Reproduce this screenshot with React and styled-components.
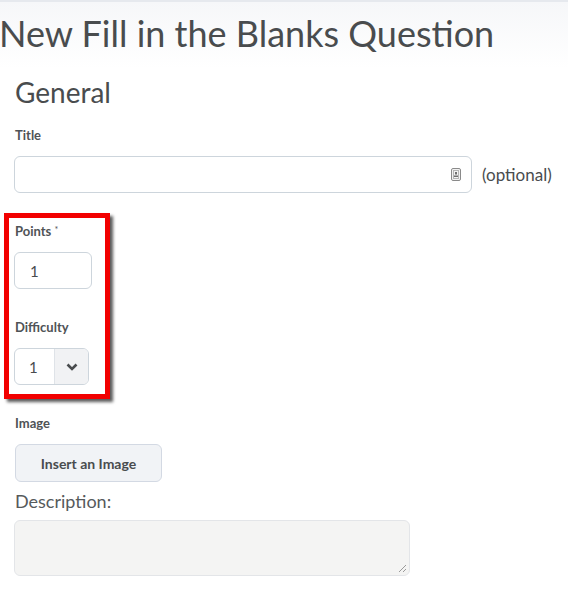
import styled, { createGlobalStyle } from 'styled-components';

const GlobalStyle = createGlobalStyle`
  body {
    margin: 0;
    background: #fff;
    font-family: Lato, "Open Sans", sans-serif;
    color: #494c4e;
  }
`;

const Header = styled.div`
  border-top: 2px solid #e6e9ee;
  background: linear-gradient(to bottom, #f6f7f9 0%, #ffffff 100%);
  height: 68px;
  box-sizing: border-box;
  padding-top: 9px;
`;

const PageTitle = styled.h1`
  margin: 0 0 0 -1px;
  font-size: 36px;
  line-height: 44px;
  font-weight: 400;
  color: #494c4e;
  white-space: nowrap;
`;

const Content = styled.div`
  padding: 0 14px;
`;

const SectionTitle = styled.h2`
  margin: 7px 0 0 1px;
  font-size: 28px;
  line-height: 34px;
  font-weight: 400;
  color: #494c4e;
`;

const Label = styled.div`
  height: 16px;
  margin: ${(p) => p.$top || 0}px 0 13px 1px;
  font-size: 13px;
  line-height: 16px;
  font-weight: 700;
  color: #4f5356;

  & sup {
    font-size: 9px;
    line-height: 0;
    font-weight: 400;
    vertical-align: 3px;
  }
`;

const Row = styled.div`
  display: flex;
  align-items: center;
  gap: 10px;
`;

const TextBox = styled.div`
  box-sizing: border-box;
  width: ${(p) => p.$width}px;
  height: 37px;
  border: 1px solid #cdd5dc;
  border-radius: 6px;
  background: #fff;
  display: flex;
  align-items: center;
  justify-content: ${(p) => (p.$icon ? 'flex-end' : 'flex-start')};
  padding: 0 ${(p) => (p.$icon ? '10px' : '15px')};
  font-size: 15px;
  color: #494c4e;
`;

const Optional = styled.span`
  font-size: 17px;
  color: #494c4e;
`;

const Highlight = styled.div`
  box-sizing: border-box;
  width: 106px;
  margin: 20px 0 0 -10px;
  border: 5px solid #f20000;
  padding: 0 0 9px 5px;
  box-shadow: 3px 3px 3px rgba(0, 0, 0, 0.65);
`;

const Select = styled.div`
  box-sizing: border-box;
  width: 75px;
  height: 37px;
  border: 1px solid #cdd5dc;
  border-radius: 6px;
  display: flex;
  overflow: hidden;
`;

const SelectValue = styled.div`
  width: 39px;
  display: flex;
  align-items: center;
  padding-left: 14px;
  box-sizing: border-box;
  font-size: 15px;
  color: #494c4e;
`;

const SelectArrow = styled.div`
  flex: 1;
  background: #f1f2f4;
  border-left: 1px solid #dfe3e8;
  display: flex;
  align-items: center;
  justify-content: center;
`;

const Button = styled.button`
  box-sizing: border-box;
  width: 147px;
  height: 38px;
  margin-left: 1px;
  border: 1px solid #d3d9e3;
  border-radius: 6px;
  background: #f1f3f6;
  font-family: Lato, sans-serif;
  font-size: 14px;
  font-weight: 700;
  color: #494c4e;
`;

const DescLabel = styled.div`
  margin: 8px 0 8px 1px;
  font-size: 18px;
  line-height: 22px;
  color: #565a5c;
`;

const TextArea = styled.div`
  position: relative;
  box-sizing: border-box;
  width: 396px;
  height: 56px;
  border: 1px solid #e3e5e8;
  border-radius: 6px;
  background: #f4f4f3;
`;

const Grip = styled.svg`
  position: absolute;
  right: 2px;
  bottom: 2px;
`;

function FieldIcon() {
  return (
    <svg width="10" height="13" viewBox="0 0 10 13">
      <rect x="0.5" y="0.5" width="9" height="12" rx="1.5" fill="#f2f2f2" stroke="#8a8a8a" />
      <rect x="2.5" y="2.5" width="5" height="8" fill="none" stroke="#b5b5b5" />
      <rect x="4" y="4" width="2" height="2.5" fill="#6f6f6f" />
      <rect x="3" y="7.5" width="4" height="1.5" fill="#6f6f6f" />
    </svg>
  );
}

function Chevron() {
  return (
    <svg width="12" height="8" viewBox="0 0 12 8">
      <path d="M1.5 1.5 L6 6 L10.5 1.5" fill="none" stroke="#494c4e" strokeWidth="2.6" />
    </svg>
  );
}

export default function App() {
  return (
    <>
      <GlobalStyle />
      <Header>
        <PageTitle>New Fill in the Blanks Question</PageTitle>
      </Header>
      <Content>
        <SectionTitle>General</SectionTitle>
        <Label $top={18}>Title</Label>
        <Row>
          <TextBox $width={458} $icon>
            <FieldIcon />
          </TextBox>
          <Optional>(optional)</Optional>
        </Row>
        <Highlight>
          <Label $top={5}>
            Points <sup>*</sup>
          </Label>
          <TextBox $width={78}>1</TextBox>
          <Label $top={30}>Difficulty</Label>
          <Select>
            <SelectValue>1</SelectValue>
            <SelectArrow>
              <Chevron />
            </SelectArrow>
          </Select>
        </Highlight>
        <Label $top={16}>Image</Label>
        <Button>Insert an Image</Button>
        <DescLabel>Description:</DescLabel>
        <TextArea>
          <Grip width="10" height="10" viewBox="0 0 10 10">
            <path d="M9 2 L2 9 M9 6 L6 9" stroke="#9a9a9a" strokeWidth="1" />
          </Grip>
        </TextArea>
      </Content>
    </>
  );
}
